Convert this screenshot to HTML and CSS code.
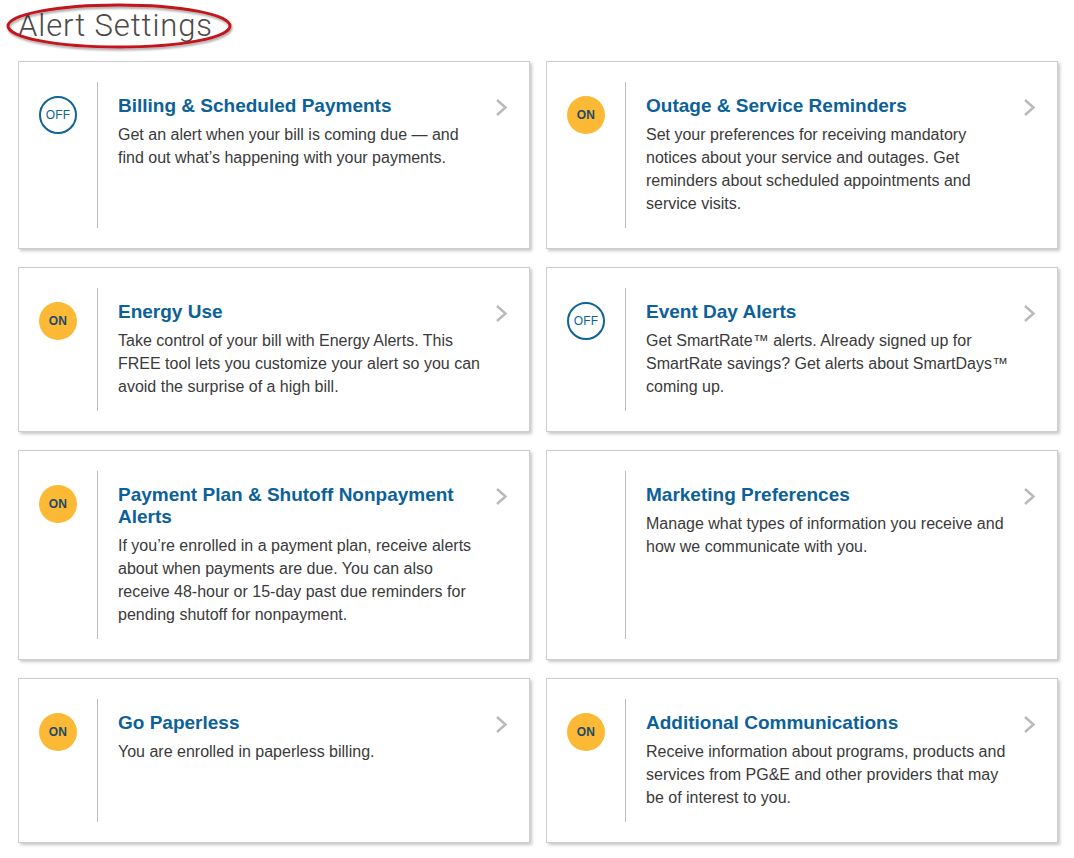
FILE: index.html
```html
<!DOCTYPE html>
<html lang="en">
<head>
<meta charset="utf-8">
<title>Alert Settings</title>
<link rel="stylesheet" href="styles.css">
</head>
<body>
<main class="page">
  <header class="page-head">
    <h1 class="page-title">Alert Settings</h1>
    <svg class="annotation" viewBox="0 0 230 50" aria-hidden="true">
      <defs>
        <filter id="sh" x="-10%" y="-20%" width="120%" height="150%">
          <feDropShadow dx="1" dy="2" stdDeviation="1.2" flood-color="#000" flood-opacity="0.35"/>
        </filter>
      </defs>
      <ellipse cx="115" cy="24" rx="111" ry="21" fill="none" stroke="#c3141c" stroke-width="3" filter="url(#sh)"/>
    </svg>
  </header>

  <section class="grid">
    <article class="card">
      <div class="badge-col"><span class="badge off">OFF</span></div>
      <div class="content">
        <h2 class="card-title">Billing &amp; Scheduled Payments</h2>
        <p class="card-desc">Get an alert when your bill is coming due — and find out what’s happening with your payments.</p>
      </div>
      <svg class="chev" viewBox="0 0 13 19" aria-hidden="true"><path d="M2 2 L10.5 9.5 L2 17"/></svg>
    </article>

    <article class="card">
      <div class="badge-col"><span class="badge on">ON</span></div>
      <div class="content">
        <h2 class="card-title">Outage &amp; Service Reminders</h2>
        <p class="card-desc">Set your preferences for receiving mandatory notices about your service and outages. Get reminders about scheduled appointments and service visits.</p>
      </div>
      <svg class="chev" viewBox="0 0 13 19" aria-hidden="true"><path d="M2 2 L10.5 9.5 L2 17"/></svg>
    </article>

    <article class="card">
      <div class="badge-col"><span class="badge on">ON</span></div>
      <div class="content">
        <h2 class="card-title">Energy Use</h2>
        <p class="card-desc">Take control of your bill with Energy Alerts. This FREE tool lets you customize your alert so you can avoid the surprise of a high bill.</p>
      </div>
      <svg class="chev" viewBox="0 0 13 19" aria-hidden="true"><path d="M2 2 L10.5 9.5 L2 17"/></svg>
    </article>

    <article class="card">
      <div class="badge-col"><span class="badge off">OFF</span></div>
      <div class="content">
        <h2 class="card-title">Event Day Alerts</h2>
        <p class="card-desc">Get SmartRate™ alerts. Already signed up for SmartRate savings? Get alerts about SmartDays™ coming up.</p>
      </div>
      <svg class="chev" viewBox="0 0 13 19" aria-hidden="true"><path d="M2 2 L10.5 9.5 L2 17"/></svg>
    </article>

    <article class="card">
      <div class="badge-col"><span class="badge on">ON</span></div>
      <div class="content">
        <h2 class="card-title">Payment Plan &amp; Shutoff Nonpayment Alerts</h2>
        <p class="card-desc">If you’re enrolled in a payment plan, receive alerts about when payments are due. You can also receive 48-hour or 15-day past due reminders for pending shutoff for nonpayment.</p>
      </div>
      <svg class="chev" viewBox="0 0 13 19" aria-hidden="true"><path d="M2 2 L10.5 9.5 L2 17"/></svg>
    </article>

    <article class="card">
      <div class="badge-col"></div>
      <div class="content">
        <h2 class="card-title">Marketing Preferences</h2>
        <p class="card-desc">Manage what types of information you receive and how we communicate with you.</p>
      </div>
      <svg class="chev" viewBox="0 0 13 19" aria-hidden="true"><path d="M2 2 L10.5 9.5 L2 17"/></svg>
    </article>

    <article class="card">
      <div class="badge-col"><span class="badge on">ON</span></div>
      <div class="content">
        <h2 class="card-title">Go Paperless</h2>
        <p class="card-desc">You are enrolled in paperless billing.</p>
      </div>
      <svg class="chev" viewBox="0 0 13 19" aria-hidden="true"><path d="M2 2 L10.5 9.5 L2 17"/></svg>
    </article>

    <article class="card">
      <div class="badge-col"><span class="badge on">ON</span></div>
      <div class="content">
        <h2 class="card-title">Additional Communications</h2>
        <p class="card-desc">Receive information about programs, products and services from PG&amp;E and other providers that may be of interest to you.</p>
      </div>
      <svg class="chev" viewBox="0 0 13 19" aria-hidden="true"><path d="M2 2 L10.5 9.5 L2 17"/></svg>
    </article>
  </section>
</main>
</body>
</html>
```

FILE: styles.css
```css
* { box-sizing: border-box; }

html, body {
  margin: 0;
  padding: 0;
  background: #ffffff;
}

body {
  font-family: "Liberation Sans", Arial, sans-serif;
  color: #3a3a3a;
}

.page {
  padding: 0 0 18px 18px;
  width: 1074px;
}

.page-head {
  position: relative;
  height: 61px;
}

.page-title {
  margin: 0;
  padding-top: 6px;
  font-family: Roboto, "Liberation Sans", sans-serif;
  font-weight: 300;
  font-size: 31px;
  line-height: 40px;
  letter-spacing: 0.9px;
  color: #4a4a4a;
}

.annotation {
  position: absolute;
  left: -14px;
  top: 2px;
  width: 230px;
  height: 50px;
  overflow: visible;
}

.grid {
  display: grid;
  grid-template-columns: 512px 512px;
  column-gap: 16px;
  row-gap: 18px;
}

.card {
  display: flex;
  align-items: stretch;
  background: #fff;
  border: 1px solid #cdcdcd;
  box-shadow: 2px 2px 3px rgba(0, 0, 0, 0.22);
  padding: 20px 21px 20px 20px;
}

.badge-col {
  flex: 0 0 58px;
  padding-top: 14px;
}

.badge {
  display: flex;
  align-items: center;
  justify-content: center;
  width: 38px;
  height: 38px;
  border-radius: 50%;
  font-size: 12px;
  letter-spacing: 0.2px;
}

.badge.off {
  border: 2px solid #0e6399;
  color: #0e6399;
  font-weight: 400;
}

.badge.on {
  background: #fbb936;
  color: #1b4a69;
  font-weight: 700;
}

.content {
  flex: 1 1 auto;
  border-left: 1px solid #bdbdbd;
  padding: 13px 0 13px 20px;
  min-height: 100px;
}

.card-title {
  margin: 0 0 6px;
  font-size: 19px;
  line-height: 22px;
  font-weight: 700;
  color: #0b6198;
}

.card-desc {
  margin: 0;
  font-size: 16px;
  line-height: 23px;
  color: #3a3a3a;
}

.chev {
  flex: 0 0 13px;
  width: 13px;
  height: 19px;
  margin: 16px 0 0 12px;
}

.chev path {
  fill: none;
  stroke: #b9b9b9;
  stroke-width: 2.4;
}
```
